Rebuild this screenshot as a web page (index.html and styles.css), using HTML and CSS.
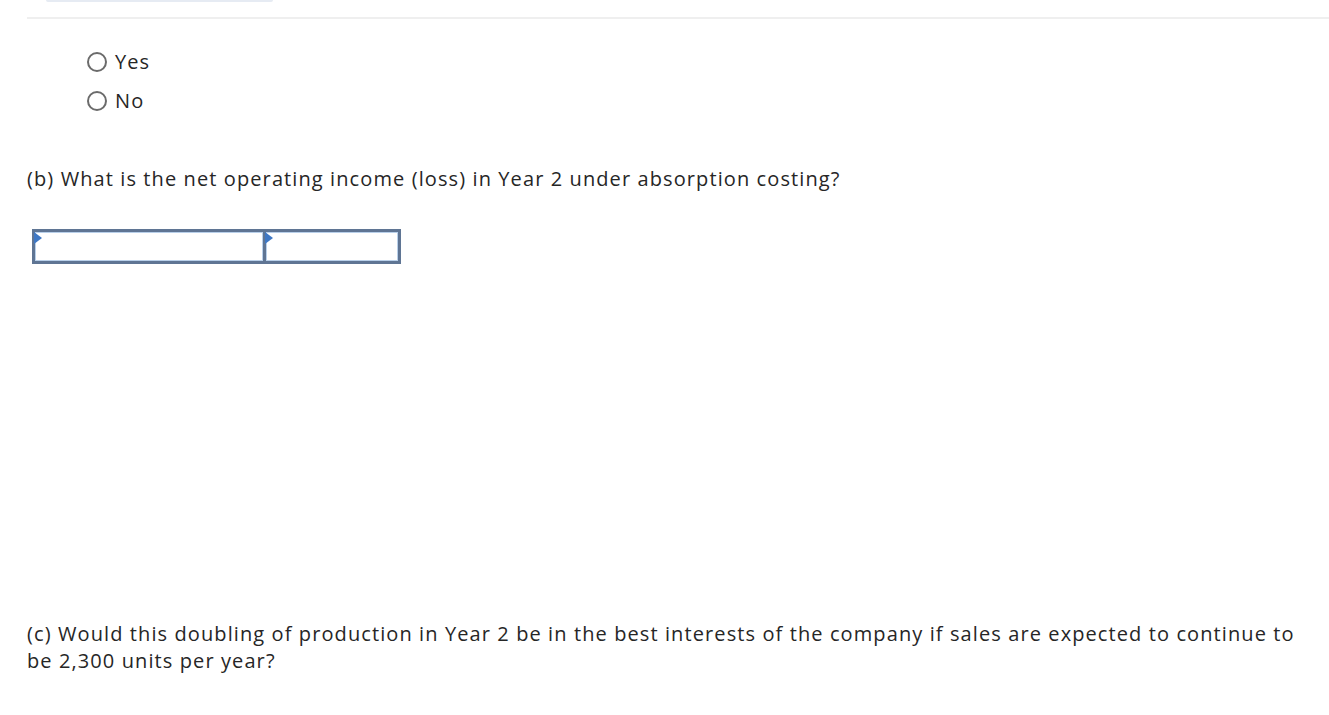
FILE: index.html
```html
<!DOCTYPE html>
<html>
<head>
<meta charset="utf-8">
<link rel="stylesheet" href="styles.css">
</head>
<body>
<div class="page">
  <div class="top-tab"></div>
  <div class="divider"></div>
  <ul class="choices">
    <li class="choice"><span class="radio"></span><span class="label">Yes</span></li>
    <li class="choice"><span class="radio"></span><span class="label">No</span></li>
  </ul>
  <p class="question q-b">(b) What is the net operating income (loss) in Year 2 under absorption costing?</p>
  <div class="answer-row">
    <div class="cell cell-wide"><span class="flag"></span></div>
    <div class="cell cell-narrow"><span class="flag"></span></div>
  </div>
  <p class="question q-c">(c) Would this doubling of production in Year 2 be in the best interests of the company if sales are expected to continue to be 2,300 units per year?</p>
</div>
</body>
</html>
```
FILE: styles.css
```css
html, body {
  margin: 0;
  padding: 0;
  background: #ffffff;
}
.page {
  font-family: "Open Sans", "Liberation Sans", sans-serif;
  color: #262626;
  font-size: 20px;
  letter-spacing: 1.1px;
  width: 1329px;
  height: 715px;
  overflow: hidden;
}
.top-tab {
  margin-left: 46px;
  width: 227px;
  height: 2px;
  background: #e6ebf3;
  border-radius: 0 0 3px 3px;
}
.divider {
  margin-top: 15px;
  margin-left: 27px;
  height: 2px;
  background: #efefef;
}
.choices {
  list-style: none;
  margin: 0;
  padding: 0 0 0 87px;
  margin-top: 23px;
}
.choice {
  display: flex;
  align-items: center;
  gap: 8px;
  height: 39px;
}
.radio {
  width: 16px;
  height: 16px;
  border: 2px solid #6b6b6b;
  border-radius: 50%;
  box-sizing: content-box;
}
.label {
  line-height: 24px;
}
.question {
  margin: 0;
  padding-left: 27px;
  line-height: 27px;
}
.q-b {
  margin-top: 45px;
}
.answer-row {
  display: flex;
  margin-left: 32px;
  margin-top: 37px;
}
.cell {
  position: relative;
  height: 35px;
  box-sizing: border-box;
  border: 3px solid #5f7594;
  box-shadow: inset 0 0 0 1px #b9d0ea;
  background: #fff;
}
.cell-wide {
  width: 234px;
}
.cell-narrow {
  width: 138px;
  margin-left: -3px;
}
.flag {
  position: absolute;
  left: -1px;
  top: 0;
  width: 0;
  height: 0;
  border-top: 6px solid transparent;
  border-bottom: 6px solid transparent;
  border-left: 8px solid #3f78c4;
}
.q-c {
  margin-top: 356px;
  padding-right: 20px;
}
```
